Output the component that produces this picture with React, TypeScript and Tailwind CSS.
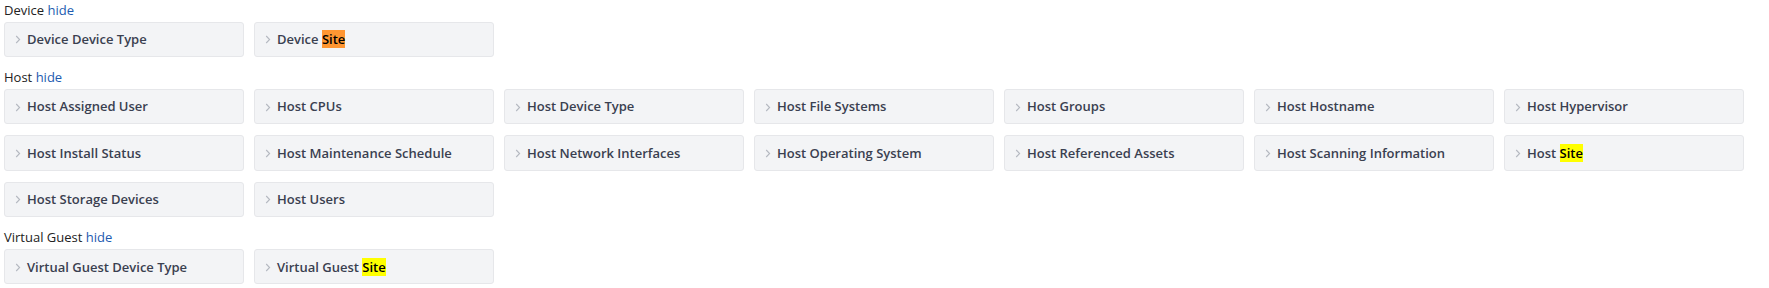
import React from "react";

type Section = {
    name: string;
    items: string[];
};

const sections: Section[] = [
    { name: "Device", items: ["Device Device Type", "Device Site"] },
    {
        name: "Host",
        items: [
            "Host Assigned User",
            "Host CPUs",
            "Host Device Type",
            "Host File Systems",
            "Host Groups",
            "Host Hostname",
            "Host Hypervisor",
            "Host Install Status",
            "Host Maintenance Schedule",
            "Host Network Interfaces",
            "Host Operating System",
            "Host Referenced Assets",
            "Host Scanning Information",
            "Host Site",
            "Host Storage Devices",
            "Host Users",
        ],
    },
    { name: "Virtual Guest", items: ["Virtual Guest Device Type", "Virtual Guest Site"] },
];

function Chevron() {
    return (
        <svg width="6" height="9" viewBox="0 0 6 9" className="shrink-0 text-[#b4b8c0]">
            <path d="M1.2 1 L4.6 4.5 L1.2 8" fill="none" stroke="currentColor" strokeWidth="1.1" />
        </svg>
    );
}

function Title({ text, active }: { text: string; active: boolean }) {
    if (!text.endsWith(" Site")) return <span>{text}</span>;
    const head = text.slice(0, -4);
    return (
        <span>
            {head}
            <mark className={`${active ? "bg-[#ff9632]" : "bg-[#ffff00]"} text-black`}>Site</mark>
        </span>
    );
}

export default function App() {
    return (
        <div
            className="w-[1769px] h-[288px] bg-white overflow-hidden pl-[4px] pt-[0.5px]"
            style={{ fontFamily: '"Open Sans", "Noto Sans", sans-serif' }}
        >
            {sections.map((section, si) => (
                <div key={section.name}>
                    <div className="h-[18px] mb-[3px] text-[13px] leading-[18px] text-[#222]">
                        {section.name} <a className="text-[#1d5bb0] cursor-pointer">hide</a>
                    </div>
                    <div className="flex flex-wrap gap-x-[10px]">
                        {section.items.map((item) => (
                            <div
                                key={item}
                                className="w-[240px] h-[35.4px] mb-[11px] flex items-center gap-[6px] pl-[10px] pt-[1px] rounded-[3px] bg-[#f3f4f6] border border-[#e6e7ea] text-[13px] font-semibold text-[#3a4050]"
                            >
                                <Chevron />
                                <Title text={item} active={si === 0} />
                            </div>
                        ))}
                    </div>
                </div>
            ))}
        </div>
    );
}
